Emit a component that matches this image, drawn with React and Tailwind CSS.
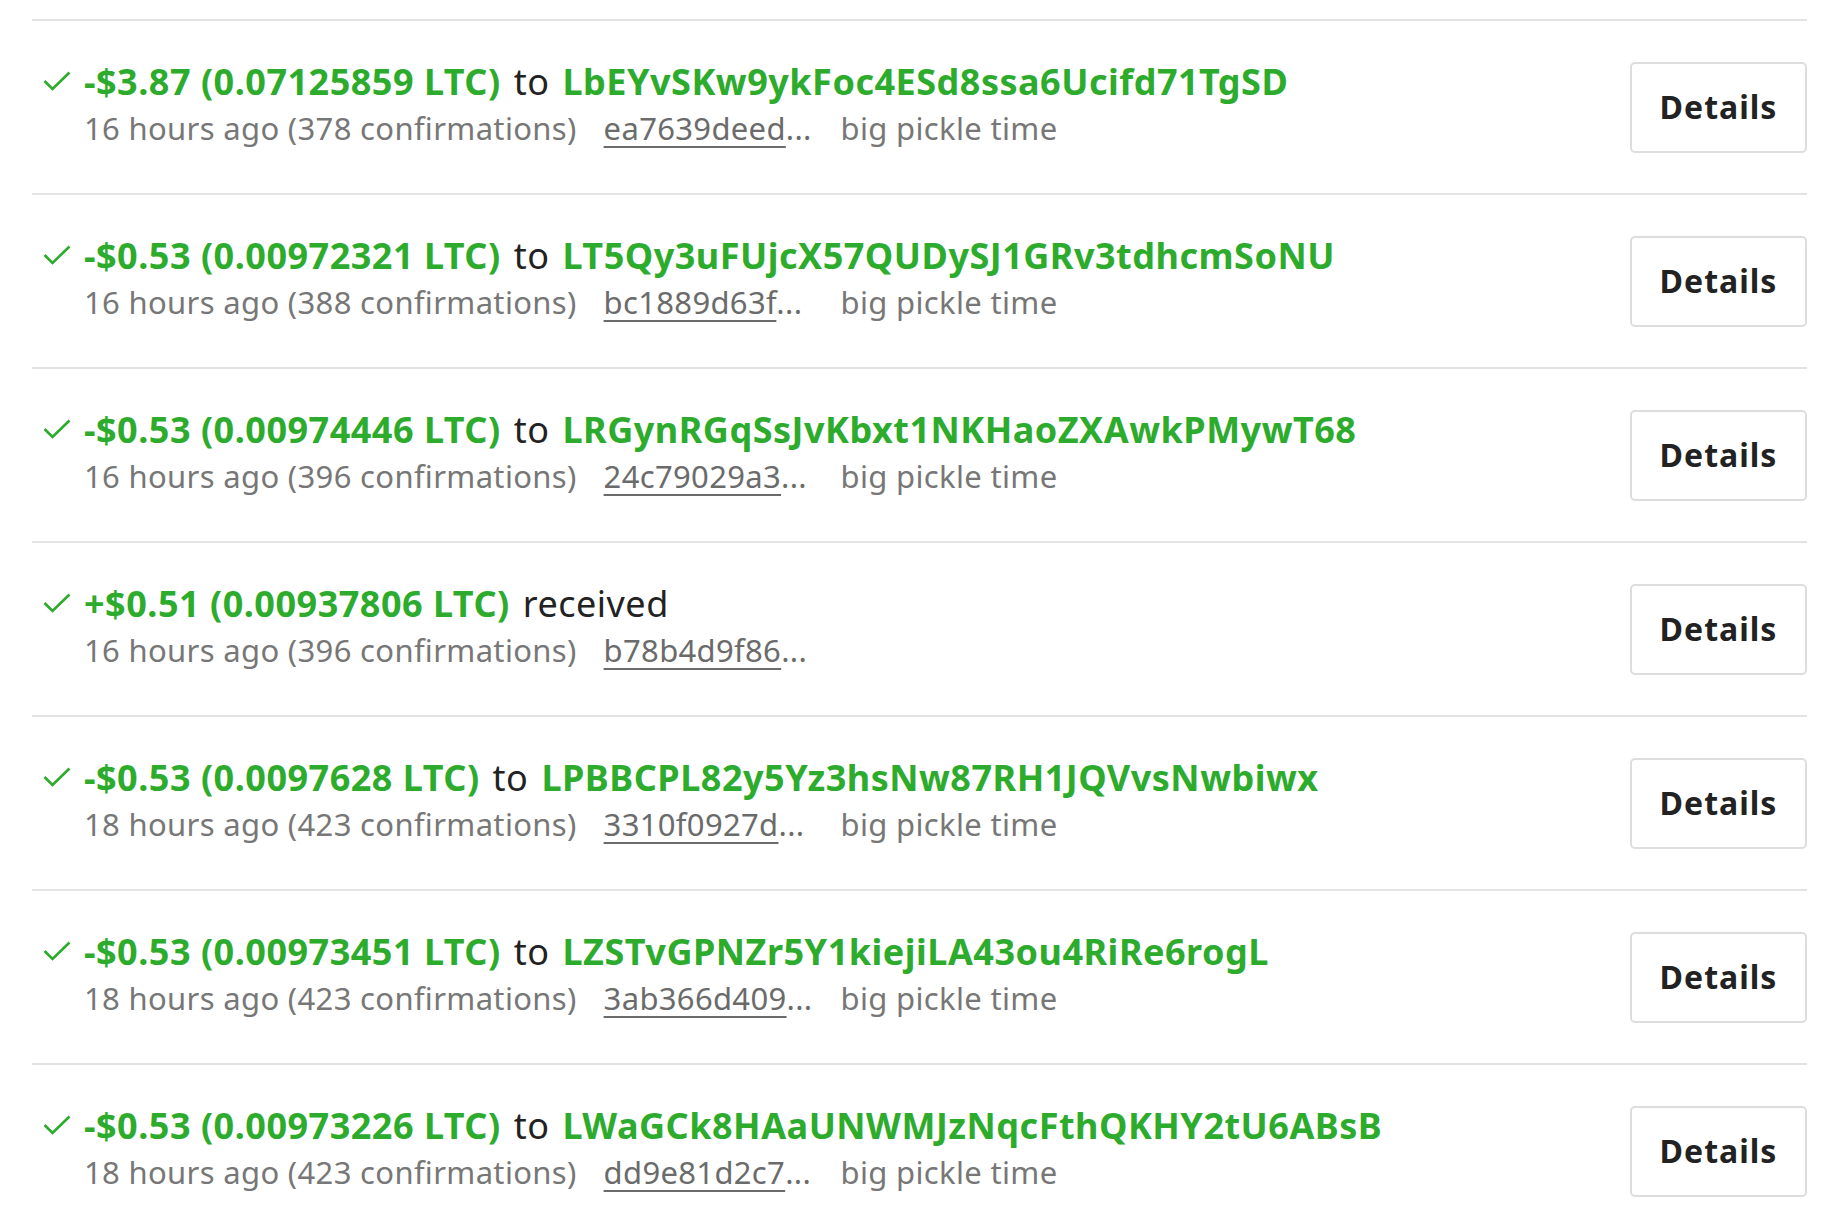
import React from "react";

const txs = [
  { usd: "-$3.87", ltc: "0.07125859", to: "LbEYvSKw9ykFoc4ESd8ssa6Ucifd71TgSD", when: "16 hours ago", conf: 378, hash: "ea7639deed", note: "big pickle time" },
  { usd: "-$0.53", ltc: "0.00972321", to: "LT5Qy3uFUjcX57QUDySJ1GRv3tdhcmSoNU", when: "16 hours ago", conf: 388, hash: "bc1889d63f", note: "big pickle time" },
  { usd: "-$0.53", ltc: "0.00974446", to: "LRGynRGqSsJvKbxt1NKHaoZXAwkPMywT68", when: "16 hours ago", conf: 396, hash: "24c79029a3", note: "big pickle time" },
  { usd: "+$0.51", ltc: "0.00937806", to: null, when: "16 hours ago", conf: 396, hash: "b78b4d9f86", note: "" },
  { usd: "-$0.53", ltc: "0.0097628", to: "LPBBCPL82y5Yz3hsNw87RH1JQVvsNwbiwx", when: "18 hours ago", conf: 423, hash: "3310f0927d", note: "big pickle time" },
  { usd: "-$0.53", ltc: "0.00973451", to: "LZSTvGPNZr5Y1kiejiLA43ou4RiRe6rogL", when: "18 hours ago", conf: 423, hash: "3ab366d409", note: "big pickle time" },
  { usd: "-$0.53", ltc: "0.00973226", to: "LWaGCk8HAaUNWMJzNqcFthQKHY2tU6ABsB", when: "18 hours ago", conf: 423, hash: "dd9e81d2c7", note: "big pickle time" },
];

function Check() {
  return (
    <svg width="28" height="22" viewBox="0 0 28 22" className="shrink-0">
      <polyline points="1.5,11 9.5,19 26.5,2.5" fill="none" stroke="#2cab2c" strokeWidth="2.6" />
    </svg>
  );
}

function TxRow({ tx }) {
  return (
    <div className="flex items-center h-[174px] border-t-2 border-[#e3e3e3]">
      <div className="flex-1 flex flex-col pb-[5px]">
        <div className="flex items-center h-[47px] text-[36px] leading-[47px] tracking-[0.5px] whitespace-nowrap">
          <div className="w-[52px] flex pl-[11px]">
            <Check />
          </div>
          <span className="font-bold text-[#2cab2c]">{tx.usd} ({tx.ltc} LTC)</span>
          {tx.to ? (
            <>
              <span className="text-[#222] ml-[13px]">to</span>
              <span className="font-bold text-[#2cab2c] ml-[13px]">{tx.to}</span>
            </>
          ) : (
            <span className="text-[#222] ml-[13px]">received</span>
          )}
        </div>
        <div className="flex items-center h-[47px] pl-[52px] text-[31px] leading-[47px] tracking-[0.33px] text-[#777] whitespace-nowrap">
          <span>{tx.when} ({tx.conf} confirmations)</span>
          <span className="ml-[27px] w-[237px] shrink-0 text-[#6b6b6b]">
            <span className="underline decoration-2 underline-offset-[6px]">{tx.hash}</span>...
          </span>
          {tx.note && <span>{tx.note}</span>}
        </div>
      </div>
      <button className="w-[177px] h-[91px] border-2 border-[#dddddd] rounded-[5px] bg-white text-[32px] tracking-[1px] font-bold text-[#222]">
        Details
      </button>
    </div>
  );
}

export default function App() {
  return (
    <div className="h-screen overflow-hidden bg-white pt-[19px] pl-[32px]" style={{ fontFamily: '"Noto Sans", sans-serif' }}>
      <div className="w-[1775px]">
        {txs.map((tx, i) => (
          <TxRow key={i} tx={tx} />
        ))}
      </div>
    </div>
  );
}
